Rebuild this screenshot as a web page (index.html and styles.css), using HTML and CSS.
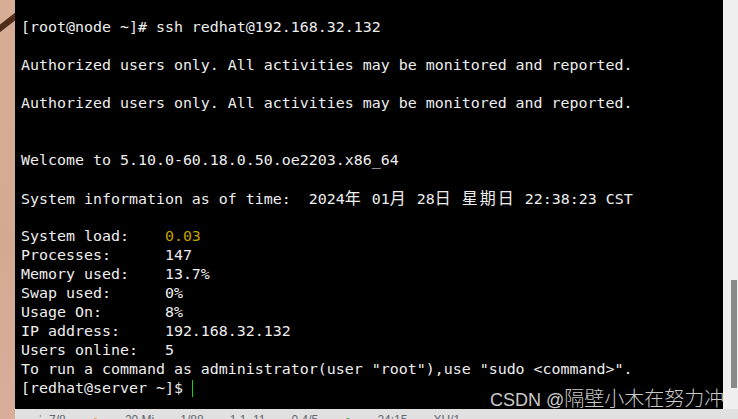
FILE: index.html
```html
<!DOCTYPE html>
<html>
<head>
<meta charset="utf-8">
<link rel="stylesheet" href="styles.css">
</head>
<body>
<div class="screen">
  <div class="desk">
    <svg class="stroke" width="15" height="40" viewBox="0 0 15 40"><path d="M-2 30 L17 15" stroke="#4f2d19" stroke-width="6" fill="none"/></svg>
  </div>
  <div class="window">
    <div class="top">
      <div class="term">
        <div class="ln">[root@node ~]# ssh redhat@192.168.32.132</div>
        <div class="ln"></div>
        <div class="ln">Authorized users only. All activities may be monitored and reported.</div>
        <div class="ln"></div>
        <div class="ln">Authorized users only. All activities may be monitored and reported.</div>
        <div class="ln"></div>
        <div class="ln"></div>
        <div class="ln">Welcome to 5.10.0-60.18.0.50.oe2203.x86_64</div>
        <div class="ln"></div>
        <div class="ln">System information as of time:  2024<span class="w">年</span> 01<span class="w">月</span> 28<span class="w">日</span> <span class="w">星</span><span class="w">期</span><span class="w">日</span> 22:38:23 CST</div>
        <div class="ln"></div>
        <div class="ln">System load:    <span class="yel">0.03</span></div>
        <div class="ln">Processes:      147</div>
        <div class="ln">Memory used:    13.7%</div>
        <div class="ln">Swap used:      0%</div>
        <div class="ln">Usage On:       8%</div>
        <div class="ln">IP address:     192.168.32.132</div>
        <div class="ln">Users online:   5</div>
        <div class="ln">To run a command as administrator(user "root"),use "sudo &lt;command&gt;".</div>
        <div class="ln">[redhat@server ~]$ <span class="cursor"></span></div>
      </div>
      <div class="scroll"><div class="thumb"></div></div>
    </div>
    <div class="status"><span class="st">· ˈ  7/8</span><span class="st dot-o">●</span><span class="st">20 Mi</span><span class="st">1/88</span><span class="st">1.1  11</span><span class="st">0.4/5</span><span class="st dot-g">●</span><span class="st">24:15</span><span class="st">XH/1</span></div>
  </div>
  <div class="mark"><span class="mark-lat">CSDN @</span><span class="mark-cjk">隔壁小木在努力冲</span></div>
</div>
</body>
</html>
```
FILE: styles.css
```css
html, body {
  margin: 0;
  padding: 0;
  background: #000;
}
.screen {
  position: relative;
  width: 738px;
  height: 419px;
  display: flex;
  overflow: hidden;
}
.desk {
  width: 15px;
  flex: none;
  background: linear-gradient(180deg, #d6ae95 0%, #d3aa91 60%, #d8ae9b 100%);
}
.stroke {
  display: block;
}
.window {
  flex: 1;
  display: flex;
  flex-direction: column;
}
.top {
  display: flex;
  height: 409px;
}
.term {
  width: 708px;
  background: #000;
  padding: 18px 0 0 6px;
  box-sizing: border-box;
  font-family: "DejaVu Sans Mono", monospace;
  font-size: 14.95px;
  color: #eeeeee;
}
.ln {
  height: 19px;
  line-height: 19px;
  white-space: pre;
}
.w {
  font-family: "Noto Sans CJK SC", sans-serif;
  font-size: 16px;
  letter-spacing: 2px;
  line-height: 17px;
}
.yel {
  color: #c4a000;
}
.cursor {
  display: inline-block;
  width: 1px;
  height: 17px;
  background: #19d119;
  vertical-align: -4px;
}
.scroll {
  width: 15px;
  background: #f0f0f0;
  padding: 280px 0 0 8px;
  box-sizing: border-box;
}
.thumb {
  width: 6px;
  height: 108px;
  background: #898989;
}
.status {
  height: 10px;
  background: #e1e1e1;
  overflow: hidden;
  display: flex;
  gap: 26px;
  padding: 4px 0 0 16px;
  box-sizing: border-box;
  font-family: "Liberation Sans", sans-serif;
  font-size: 12px;
  line-height: 14px;
  color: #5f6670;
  white-space: pre;
}
.dot-o {
  color: #e8a040;
}
.dot-g {
  color: #3aa040;
}
.mark {
  position: absolute;
  left: 490px;
  top: 385px;
  display: flex;
  align-items: baseline;
  color: #c9c9c9;
  white-space: pre;
}
.mark-lat {
  font-family: "Liberation Sans", sans-serif;
  font-size: 18px;
  letter-spacing: 0px;
}
.mark-cjk {
  font-family: "Noto Sans CJK SC", sans-serif;
  font-size: 20px;
  font-weight: 300;
  line-height: 26px;
}
```
